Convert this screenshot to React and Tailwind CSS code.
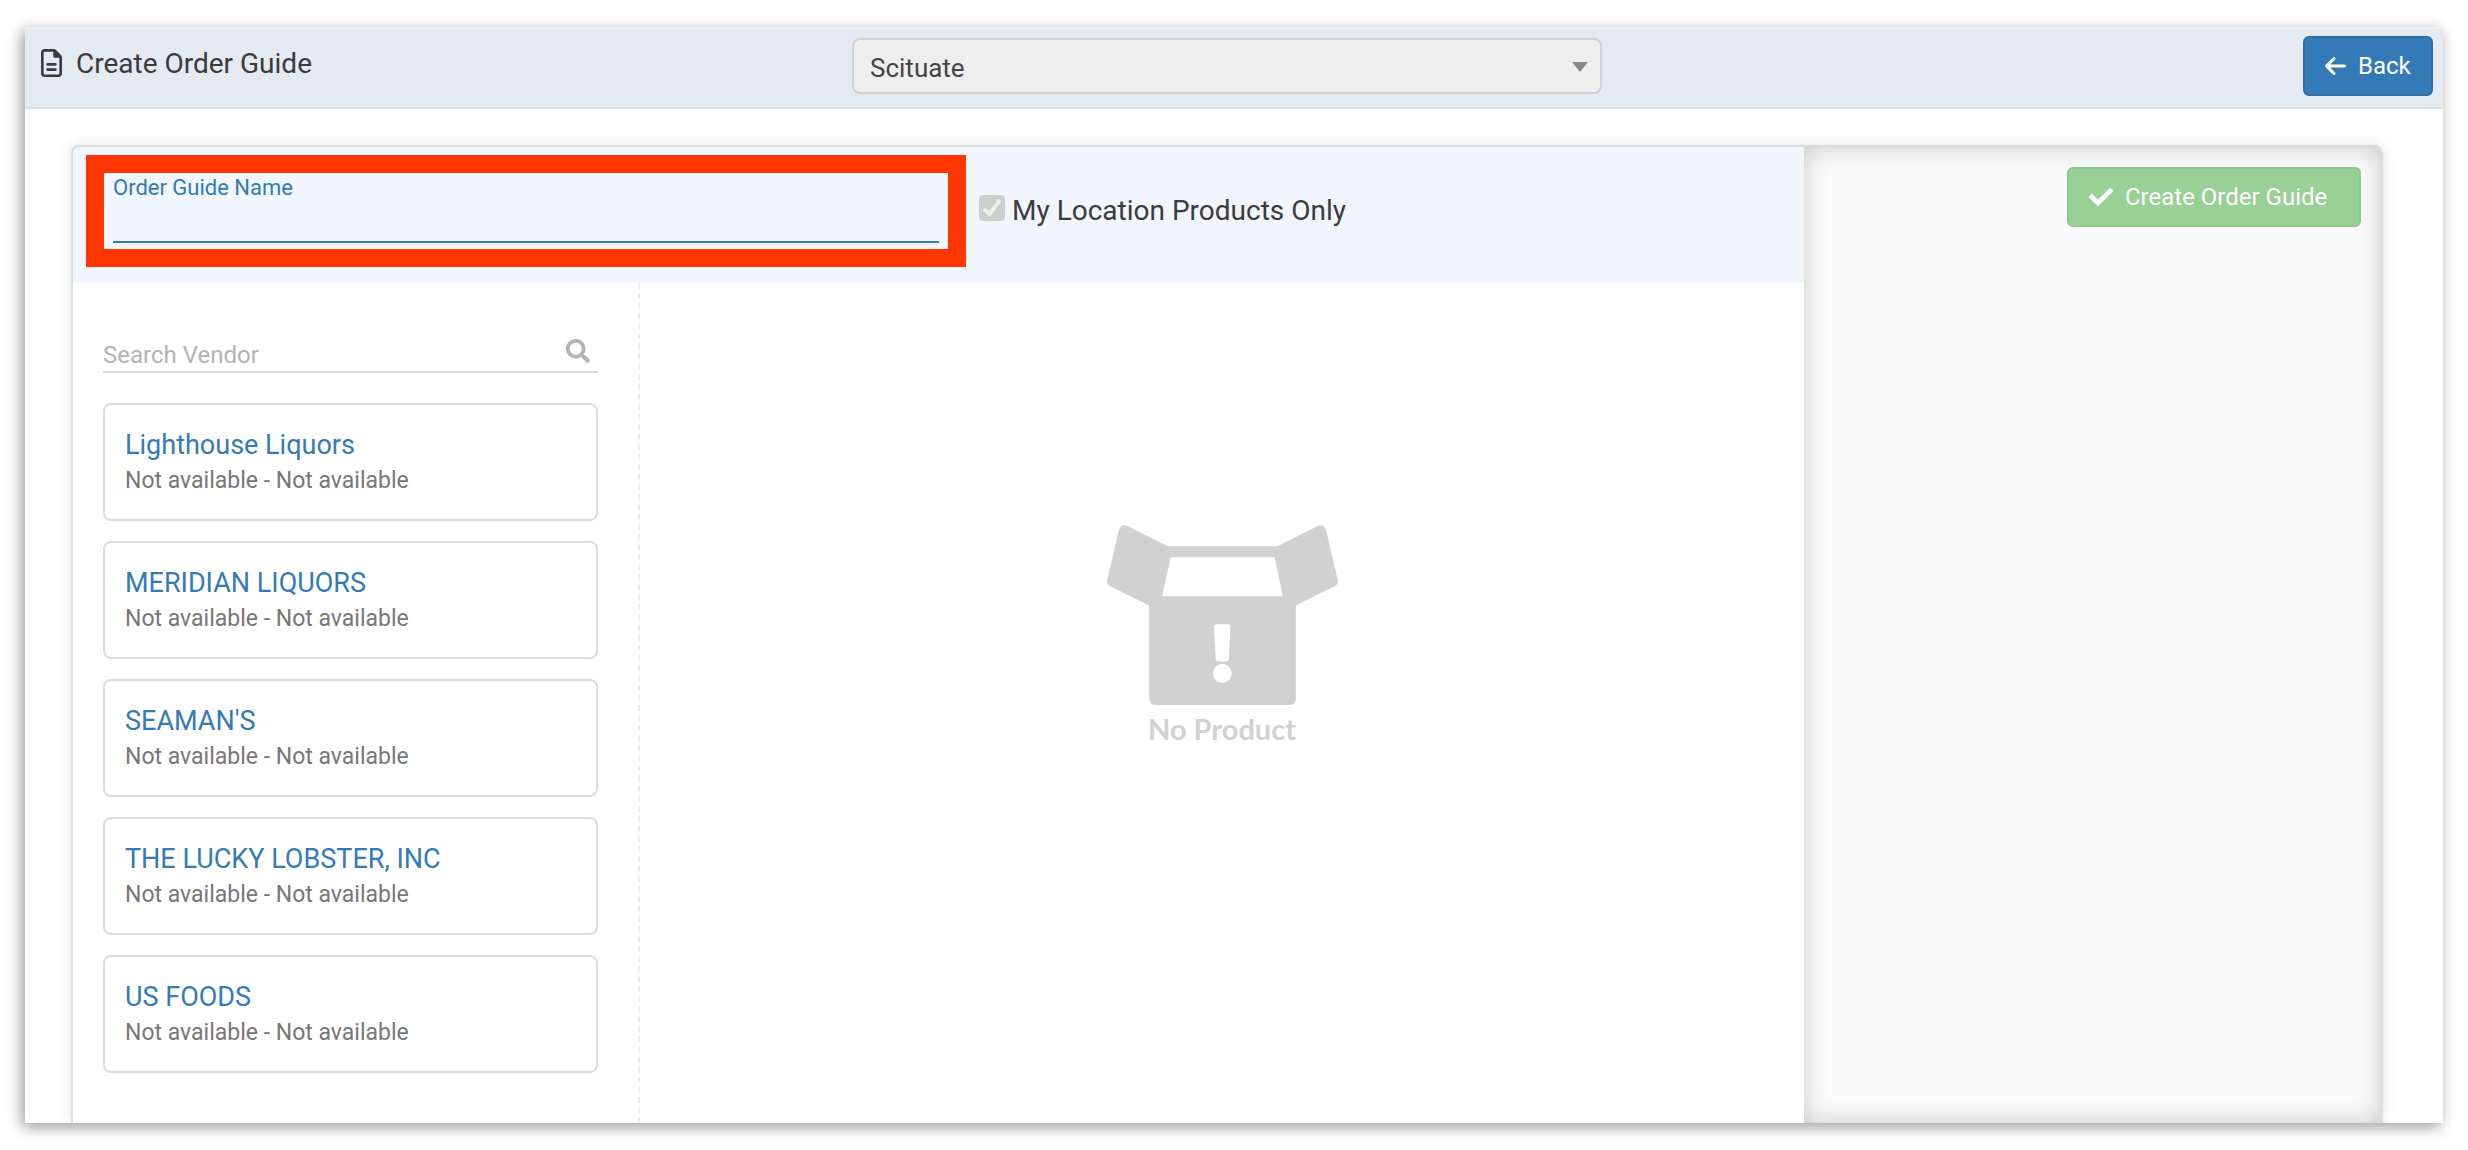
import React, { useState } from 'react';
import { FaRegFileLines, FaArrowLeft } from 'react-icons/fa6';
import { FaCheck, FaSearch } from 'react-icons/fa';

const VENDORS = [
  { id: 1, name: 'Lighthouse Liquors' },
  { id: 2, name: 'MERIDIAN LIQUORS' },
  { id: 3, name: "SEAMAN'S" },
  { id: 4, name: 'THE LUCKY LOBSTER, INC' },
  { id: 5, name: 'US FOODS' },
];

export default function App() {
  const [name, setName] = useState('');
  const [search, setSearch] = useState('');
  const [selected, setSelected] = useState(null);

  const vendors = VENDORS.filter(v => v.name.toLowerCase().includes(search.toLowerCase()));

  return (
    <div className="min-h-screen flex px-[25px] py-[27px] bg-white text-[#3b3b3b] font-['Roboto',sans-serif]">
      <div className="flex-1 min-w-0 flex flex-col bg-white shadow-[-3px_4px_14px_rgba(0,0,0,0.4)]">
        <Header />

        <main className="flex-1 flex pl-[46px] pr-[60px] pt-9 overflow-hidden">
          <div className="flex-1 min-w-0 flex rounded-t-lg border-2 border-b-0 border-[#dddddd] shadow-[0_0_14px_rgba(0,0,0,0.12)]">
            <section className="w-3/4 flex flex-col">
              {/* Name + filter */}
              <div className="h-[136px] flex items-start pl-[13px] pt-2 bg-[#f1f6fe] rounded-tl-md">
                <div className="w-[880px] h-28 border-[18px] border-[#ff3600] px-[9px] flex flex-col">
                  <label htmlFor="guide-name" className="text-[22px] leading-[30px] text-[#337ab7]">Order Guide Name</label>
                  <input
                    id="guide-name"
                    type="text"
                    value={name}
                    onChange={e => setName(e.target.value)}
                    className="w-full h-10 text-2xl bg-transparent border-b-2 border-[#337ab7] outline-none"
                  />
                </div>
                <div className="ml-[13px] mt-10 flex items-start">
                  <div className="relative w-[26px] h-[26px]">
                    <input
                      id="my-location"
                      type="checkbox"
                      checked
                      disabled
                      readOnly
                      className="block appearance-none w-[26px] h-[26px] rounded bg-[#cdcecd]"
                    />
                    <svg viewBox="0 0 26 26" className="absolute inset-0 pointer-events-none" fill="none" stroke="#efefef" strokeWidth="4">
                      <path d="M5 14 L10.5 19 L21 5" />
                    </svg>
                  </div>
                  <label htmlFor="my-location" className="ml-[7px] text-[28px] leading-8">My Location Products Only</label>
                </div>
              </div>

              <div className="flex-1 flex">
                {/* Vendors */}
                <div className="w-[567px] shrink-0 pl-[30px] pr-10 pt-[50px] border-r-2 border-dashed border-[#eeeeee]">
                  <div className="h-10 flex items-center border-b-2 border-[#dcdcdc]">
                    <input
                      type="text"
                      aria-label="Search Vendor"
                      placeholder="Search Vendor"
                      value={search}
                      onChange={e => setSearch(e.target.value)}
                      className="flex-1 min-w-0 pt-[6px] text-2xl leading-8 placeholder:text-[#b3b3b3] outline-none"
                    />
                    <FaSearch className="w-6 h-6 mr-2 mb-[2px] text-[#b3b3b3]" />
                  </div>
                  <ul className="mt-[30px] flex flex-col gap-5">
                    {vendors.map(v => (
                      <li key={v.id}>
                        <button
                          onClick={() => setSelected(v.id)}
                          className={`block w-full h-[118px] px-5 pt-[2px] text-left bg-white border-2 rounded-lg ${selected === v.id ? 'border-[#337ab7]' : 'border-[#dcdcdc]'}`}
                        >
                          <span className="block text-[27px] leading-9 text-[#337ab7]">{v.name}</span>
                          <span className="block text-[23px] leading-9 text-[#777777]">Not available - Not available</span>
                        </button>
                      </li>
                    ))}
                  </ul>
                </div>

                {/* Products */}
                <div className="flex-1 pt-[242px] flex flex-col items-center text-[#d1d1d1]">
                  <EmptyBox />
                  <p className="mt-1 font-['Lato',sans-serif] font-bold text-[29px] leading-10">No Product</p>
                </div>
              </div>
            </section>

            <aside className="w-1/4 flex justify-end items-start pt-5 pr-5 bg-[#fafafa] rounded-tr-md shadow-[inset_0_0_24px_rgba(0,0,0,0.2)]">
              <button className="w-[294px] h-[60px] pl-5 flex items-center gap-3 rounded-md border-2 border-[#8cc98c] bg-[#98d096] text-white text-2xl">
                <FaCheck className="w-6 h-6" />
                Create Order Guide
              </button>
            </aside>
          </div>
        </main>
      </div>
    </div>
  );
}

function Header() {
  return (
    <header className="h-[82px] grid grid-cols-3 border-t-2 border-b-2 border-t-[#efefef] border-b-[#e0e1e3] bg-[#e3eaf2]">
      <h1 className="pl-4 pt-4 h-[54px] flex items-center gap-[14px] text-[28px] leading-9">
        <FaRegFileLines className="w-[21px] h-7 mb-[2px]" />
        Create Order Guide
      </h1>
      <div className="pl-[21px] pr-[35px] pt-[9px]">
        <div className="relative">
          <select
            aria-label="Location"
            className="block appearance-none w-full h-14 pl-4 pr-12 pt-[5px] text-[26px] text-[#444444] bg-[#eeeeee] border-2 border-[#d2d2d2] rounded-lg"
          >
            <option>Scituate</option>
          </select>
          <svg viewBox="0 0 16 10" className="absolute right-[14px] top-6 w-4 h-[10px] pointer-events-none" fill="#888888">
            <path d="M0 0h16L8 10z" />
          </svg>
        </div>
      </div>
      <div className="flex justify-end items-start pt-[7px] pr-[10px]">
        <button className="w-[130px] h-[60px] pl-5 flex items-center gap-3 rounded-md border-2 border-[#2e6da4] bg-[#337ab7] text-white text-2xl">
          <FaArrowLeft className="w-[21px] h-6" />
          Back
        </button>
      </div>
    </header>
  );
}

function EmptyBox() {
  return (
    <svg viewBox="0 0 693 541" className="w-[231px] h-[180px]" fill="currentColor" fillRule="evenodd">
      <path d="M60 2 L182 64 H512 L634 2 Q652 -4 658 16 L693 166 Q695 178 684 184 L567 242 V523 Q566 540 549 541 H144 Q127 540 126 523 V242 L9 184 Q-2 178 0 166 L35 16 Q42 -4 60 2 Z M191 97 L165 214 H528 L503 97 Z M330 298 Q321 298 321 306 L326 402 Q327 410 335 410 H357 Q365 410 366 402 L370 306 Q370 298 362 298 Z M346 418 a28 28 0 1 0 0.1 0 Z" />
    </svg>
  );
}
